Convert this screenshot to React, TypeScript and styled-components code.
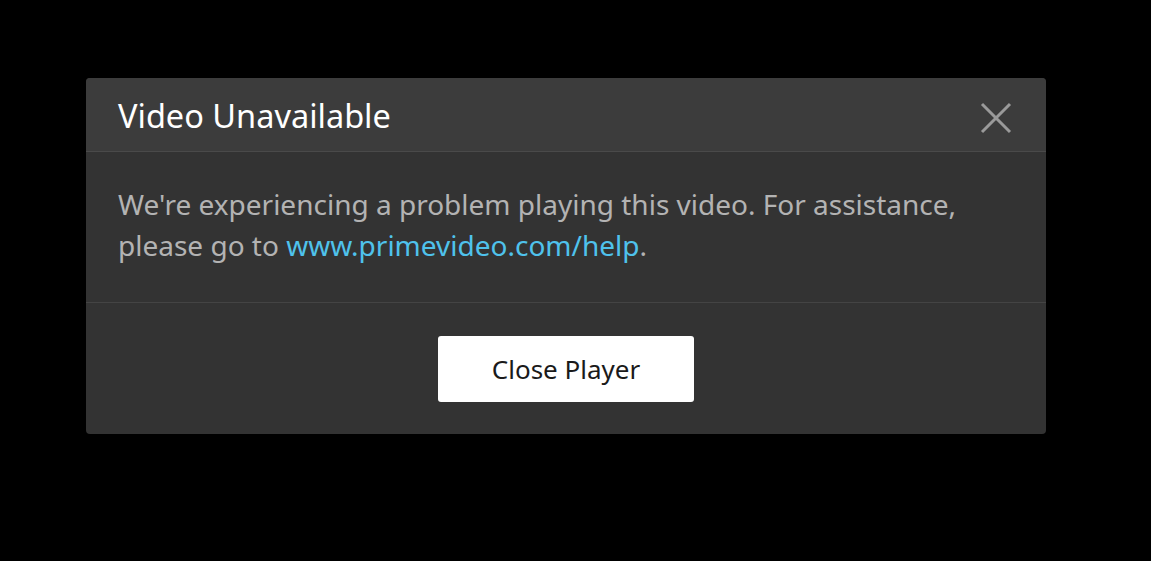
import React from "react";
import styled, { createGlobalStyle } from "styled-components";

const Global = createGlobalStyle`
  html, body { margin: 0; padding: 0; background: #000; }
  body { font-family: "Noto Sans", "Open Sans", sans-serif; }
`;

const Page = styled.div`
  width: 1151px;
  height: 561px;
  background: #000;
  padding: 78px 0 0 86px;
  box-sizing: border-box;
`;

const Dialog = styled.div`
  width: 960px;
  height: 356px;
  background: #333333;
  border-radius: 4px;
  overflow: hidden;
  display: flex;
  flex-direction: column;
`;

const Header = styled.div`
  height: 73px;
  background: #3c3c3c;
  border-bottom: 1px solid #4a4a4a;
  display: flex;
  align-items: center;
  justify-content: space-between;
  padding: 0 32px 0 32px;
`;

const Title = styled.h1`
  margin: 0;
  font-size: 32.5px;
  font-weight: 400;
  color: #ffffff;
  letter-spacing: 0;
  margin-top: 2px;
`;

const CloseIcon = styled.button`
  background: none;
  border: none;
  padding: 0;
  width: 32px;
  height: 32px;
  margin-top: 6px;
  margin-right: 2px;
  display: flex;
  align-items: center;
  justify-content: center;
`;

const Body = styled.div`
  height: 151px;
  border-bottom: 1px solid #444444;
  padding: 32px 32px 0 32px;
  box-sizing: border-box;
`;

const Message = styled.p`
  margin: 0;
  font-size: 28px;
  line-height: 41px;
  color: #b3b3b3;
`;

const Link = styled.a`
  color: #4fc2ec;
  text-decoration: none;
`;

const Footer = styled.div`
  flex: 1;
  display: flex;
  align-items: center;
  justify-content: center;
`;

const Button = styled.button`
  width: 256px;
  height: 66px;
  background: #ffffff;
  border: none;
  border-radius: 3px;
  font-family: "Noto Sans", "Open Sans", sans-serif;
  font-size: 26px;
  color: #1a1a1a;
  margin-top: 1px;
  padding: 0;
`;

export default function App() {
  return (
    <>
      <Global />
      <Page>
        <Dialog>
          <Header>
            <Title>Video Unavailable</Title>
            <CloseIcon aria-label="Close">
              <svg width="32" height="32" viewBox="0 0 32 32">
                <path d="M2 2 L30 30 M30 2 L2 30" stroke="#9a9a9a" strokeWidth="3" />
              </svg>
            </CloseIcon>
          </Header>
          <Body>
            <Message>
              We're experiencing a problem playing this video. For assistance,
              <br />
              please go to <Link href="#">www.primevideo.com/help</Link>.
            </Message>
          </Body>
          <Footer>
            <Button>Close Player</Button>
          </Footer>
        </Dialog>
      </Page>
    </>
  );
}
